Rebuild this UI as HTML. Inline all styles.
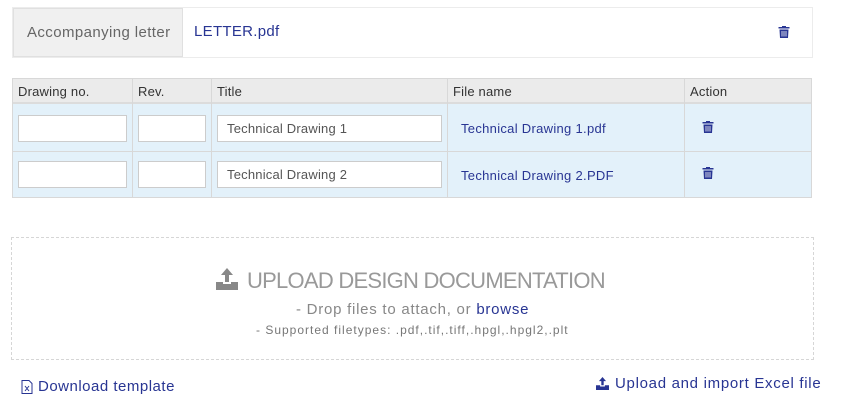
<!DOCTYPE html>
<html><head><meta charset="utf-8"><style>
*{box-sizing:border-box;margin:0;padding:0}
body{width:864px;height:405px;background:#fff;font-family:"Liberation Sans",sans-serif;font-size:13px;color:#333;position:relative;overflow:hidden;letter-spacing:0.2px}
.abs{position:absolute}
.blue{color:#283593}
.inp{position:absolute;height:27px;border:1px solid #ccc;background:#fff;font-size:13px;color:#555;padding:5px 9px;white-space:nowrap}
.vl{position:absolute;width:1px;background:#d8d8d8}
.hl{position:absolute;height:1px;background:#d8d8d8}
</style></head><body>
<div class="abs" style="left:12px;top:7px;width:801px;height:51px;border:1px solid #ececec"></div>
<div class="abs" style="left:13px;top:8px;width:170px;height:49px;background:#f0f0f0;border:1px solid #e0e0e0;font-size:15px;color:#666;padding:15px 0 0 13px;letter-spacing:0.4px">Accompanying letter</div>
<div class="abs blue" style="left:194px;top:23px;font-size:15px;letter-spacing:0.3px">LETTER.pdf</div>
<svg class="abs" style="left:778px;top:25px" width="12" height="14" viewBox="0 0 12 14"><path d="M4 1h4v1h3.5v1.5h-11V2H4z M1.5 4.5h9L10 13H2z" fill="#283593"/><path d="M4 6v5.5M6 6v5.5M8 6v5.5" stroke="#fff" stroke-width="0.8"/></svg>

<div class="abs" style="left:12px;top:78px;width:800px;height:120px;border:1px solid #d8d8d8;background:#e3f1fa"></div>
<div class="abs" style="left:13px;top:79px;width:798px;height:25px;background:#ebebeb;border-bottom:2px solid #dcdcdc"></div>
<div class="hl" style="left:13px;top:151px;width:798px"></div>
<div class="vl" style="left:132px;top:79px;height:118px"></div>
<div class="vl" style="left:211px;top:79px;height:118px"></div>
<div class="vl" style="left:447px;top:79px;height:118px"></div>
<div class="vl" style="left:684px;top:79px;height:118px"></div>
<div class="abs" style="left:18px;top:84px">Drawing no.</div>
<div class="abs" style="left:138px;top:84px">Rev.</div>
<div class="abs" style="left:217px;top:84px">Title</div>
<div class="abs" style="left:453px;top:84px">File name</div>
<div class="abs" style="left:690px;top:84px">Action</div>

<div class="inp" style="left:18px;top:115px;width:109px"></div>
<div class="inp" style="left:138px;top:115px;width:68px"></div>
<div class="inp" style="left:217px;top:115px;width:225px">Technical Drawing 1</div>
<div class="abs blue" style="left:461px;top:121px;letter-spacing:0.3px">Technical Drawing 1.pdf</div>
<svg class="abs" style="left:702px;top:120px" width="12" height="14" viewBox="0 0 12 14"><path d="M4 1h4v1h3.5v1.5h-11V2H4z M1.5 4.5h9L10 13H2z" fill="#283593"/><path d="M4 6v5.5M6 6v5.5M8 6v5.5" stroke="#fff" stroke-width="0.8"/></svg>

<div class="inp" style="left:18px;top:161px;width:109px"></div>
<div class="inp" style="left:138px;top:161px;width:68px"></div>
<div class="inp" style="left:217px;top:161px;width:225px">Technical Drawing 2</div>
<div class="abs blue" style="left:461px;top:168px;letter-spacing:0.3px">Technical Drawing 2.PDF</div>
<svg class="abs" style="left:702px;top:166px" width="12" height="14" viewBox="0 0 12 14"><path d="M4 1h4v1h3.5v1.5h-11V2H4z M1.5 4.5h9L10 13H2z" fill="#283593"/><path d="M4 6v5.5M6 6v5.5M8 6v5.5" stroke="#fff" stroke-width="0.8"/></svg>

<div class="abs" style="left:11px;top:237px;width:803px;height:123px;border:1px dashed #d6d6d6"></div>
<svg class="abs" style="left:216px;top:268px" width="22" height="22" viewBox="0 0 22 22"><path d="M11 0l6 7h-4v7H9V7H5z M0 14h7v2h8v-2h7v8H0z" fill="#888"/></svg>
<div class="abs" style="left:247px;top:268px;font-size:22px;color:#999;font-weight:300;letter-spacing:-0.75px">UPLOAD DESIGN DOCUMENTATION</div>
<div class="abs" style="left:296px;top:301px;font-size:15px;color:#888;letter-spacing:0.75px">- Drop files to attach, or <span class="blue">browse</span></div>
<div class="abs" style="left:256px;top:323px;font-size:12px;color:#777;letter-spacing:1.0px">- Supported filetypes: .pdf,.tif,.tiff,.hpgl,.hpgl2,.plt</div>

<svg class="abs" style="left:21px;top:380px" width="12" height="14" viewBox="0 0 12 14"><path d="M1 .5h7l3 3v10H1z" fill="none" stroke="#283593"/><path d="M4 6l4 5M8 6l-4 5" stroke="#283593"/></svg>
<div class="abs blue" style="left:38px;top:378px;font-size:15px;letter-spacing:0.5px">Download template</div>
<svg class="abs" style="left:596px;top:377px" width="13" height="13" viewBox="0 0 22 22"><path d="M11 0l6 7h-4v7H9V7H5z M0 14h7v2h8v-2h7v8H0z" fill="#283593"/></svg>
<div class="abs blue" style="left:615px;top:375px;font-size:15px;letter-spacing:0.7px">Upload and import Excel file</div>
</body></html>
